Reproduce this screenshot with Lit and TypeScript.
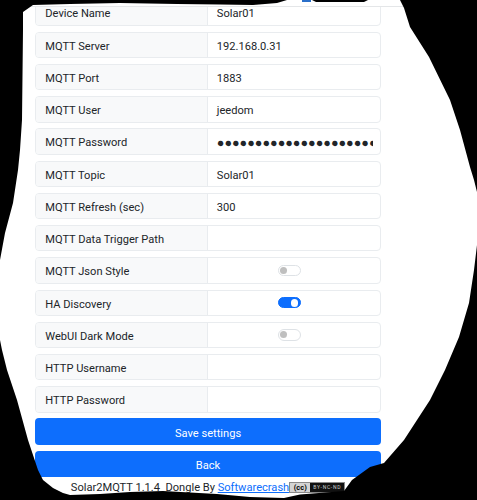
import { LitElement, html, css, svg } from "lit";
import { customElement } from "lit/decorators.js";

type Row = { label: string; value?: string; kind?: "text" | "password" | "switch"; on?: boolean };

const ROWS: Row[] = [
  { label: "Device Name", value: "Solar01" },
  { label: "MQTT Server", value: "192.168.0.31" },
  { label: "MQTT Port", value: "1883" },
  { label: "MQTT User", value: "jeedom" },
  { label: "MQTT Password", value: "●●●●●●●●●●●●●●●●●●●●●●●●", kind: "password" },
  { label: "MQTT Topic", value: "Solar01" },
  { label: "MQTT Refresh (sec)", value: "300" },
  { label: "MQTT Data Trigger Path" },
  { label: "MQTT Json Style", kind: "switch" },
  { label: "HA Discovery", kind: "switch", on: true },
  { label: "WebUI Dark Mode", kind: "switch" },
  { label: "HTTP Username" },
  { label: "HTTP Password" },
];

const MASK =
  "M0 0H477V500H0Z M23 12L33 5L70 4L120 3L177 4L220 4.500L253 5L277 3L287 0L312 0L316 2L364 2L368 0L400 0L404 8L410 27L429 57L450 100L460 130L470 167L474 180L477 192L477 245L474 270L469 303L459 337L445 370L430 400L417 420L404 440L384 463L370 467L352 480L344 491L300 494.500L284 498L250 497L217 494L163 491L130 492L100 494L70 495L63 493L53 488L43 480L38 470L28 440L17 400L7 370L2 350L0 340L0 260L5 233L13 203L18 170L20 150L22 120L23 30Z";

@customElement("app-root")
export class AppRoot extends LitElement {
  static styles = css`
    :host {
      display: block;
      position: relative;
      width: 477px;
      height: 500px;
      overflow: hidden;
      background: #fff;
      font-family: Roboto, "Noto Sans", sans-serif;
      font-size: 11.1px;
      color: #212529;
    }
    .form {
      display: flex;
      flex-direction: column;
      gap: 5.85px;
      width: 345.5px;
      margin: -0.6px 0 0 35.3px;
    }
    .row {
      display: flex;
      height: 26.4px;
      box-sizing: border-box;
      border: 1px solid #e9ecef;
      border-radius: 4px;
      overflow: hidden;
    }
    .label {
      flex: 0 0 172px;
      display: flex;
      align-items: center;
      padding: 2.6px 0 0 9px;
      box-sizing: border-box;
      background: #f8f9fa;
      border-right: 1px solid #e9ecef;
      white-space: nowrap;
    }
    .value {
      flex: 1;
      min-width: 0;
      display: flex;
      align-items: center;
      padding: 2.6px 0 0 8.5px;
      white-space: nowrap;
    }
    .dots {
      font-size: 12.6px;
      overflow: hidden;
      width: 156px;
    }
    .center {
      justify-content: center;
      padding: 0 9.5px 0 0;
    }
    .switch {
      width: 22.7px;
      height: 11.4px;
      box-sizing: border-box;
      border: 1px solid #dee2e6;
      border-radius: 6px;
      background: #fff;
      display: flex;
      align-items: center;
      padding: 0 1.2px;
    }
    .knob {
      width: 7px;
      height: 7px;
      border-radius: 50%;
      background: #bfbfbf;
    }
    .switch.on {
      background: #0d6efd;
      border-color: #0d6efd;
      justify-content: flex-end;
    }
    .switch.on .knob {
      background: #fff;
      width: 7.7px;
      height: 7.7px;
    }
    .btn {
      height: 26.6px;
      box-sizing: border-box;
      padding-top: 2.6px;
      display: flex;
      align-items: center;
      justify-content: center;
      background: #0d6efd;
      color: #fff;
      border-radius: 4px;
    }
    .footer {
      display: flex;
      align-items: center;
      justify-content: center;
      height: 20px;
      margin-top: -5.85px;
      white-space: nowrap;
    }
    .footer a {
      color: #0d6efd;
      text-decoration: underline;
    }
    .badge {
      display: inline-flex;
      align-items: center;
      flex: none;
      height: 11px;
      width: 56px;
      background: #111;
      border: 1px solid #8a8a8a;
      box-sizing: border-box;
      font-size: 5px;
      color: #cfcfcf;
      letter-spacing: 0.7px;
    }
    .cc {
      background: #d4d4d4;
      color: #000;
      font-size: 7.5px;
      font-weight: 700;
      letter-spacing: 0;
      height: 100%;
      display: flex;
      align-items: center;
      padding: 0 3.5px;
      margin-right: 3px;
    }
    .topbar {
      position: absolute;
      left: 0;
      top: 0;
      width: 100%;
      height: 7px;
      box-sizing: border-box;
      background: #fff;
      border-bottom: 1px solid #e4e6e8;
    }
    .tab {
      position: absolute;
      left: 302px;
      top: 0;
      width: 9px;
      height: 2px;
      background: #2a6fc9;
    }
    .mask {
      position: absolute;
      inset: 0;
      width: 477px;
      height: 500px;
      pointer-events: none;
    }
  `;

  private renderValue(r: Row) {
    if (r.kind === "switch") {
      return html`<div class="value center">
        <span class="switch ${r.on ? "on" : ""}"><span class="knob"></span></span>
      </div>`;
    }
    if (r.kind === "password") {
      return html`<div class="value"><span class="dots">${r.value}</span></div>`;
    }
    return html`<div class="value">${r.value ?? ""}</div>`;
  }

  render() {
    return html`
      <div class="form">
        ${ROWS.map(
          (r) => html`<div class="row">
            <div class="label">${r.label}</div>
            ${this.renderValue(r)}
          </div>`
        )}
        <div class="btn">Save settings</div>
        <div class="btn">Back</div>
        <div class="footer">
          <span>Solar2MQTT 1.1.4&nbsp; Dongle By <a>Softwarecrash</a></span>
          <span class="badge"><span class="cc">(cc)</span>BY-NC-ND</span>
        </div>
      </div>
      <div class="topbar"><span class="tab"></span></div>
      <svg class="mask" viewBox="0 0 477 500">
        ${svg`<path d=${MASK} fill="#000" fill-rule="evenodd"></path>`}
      </svg>
    `;
  }
}
